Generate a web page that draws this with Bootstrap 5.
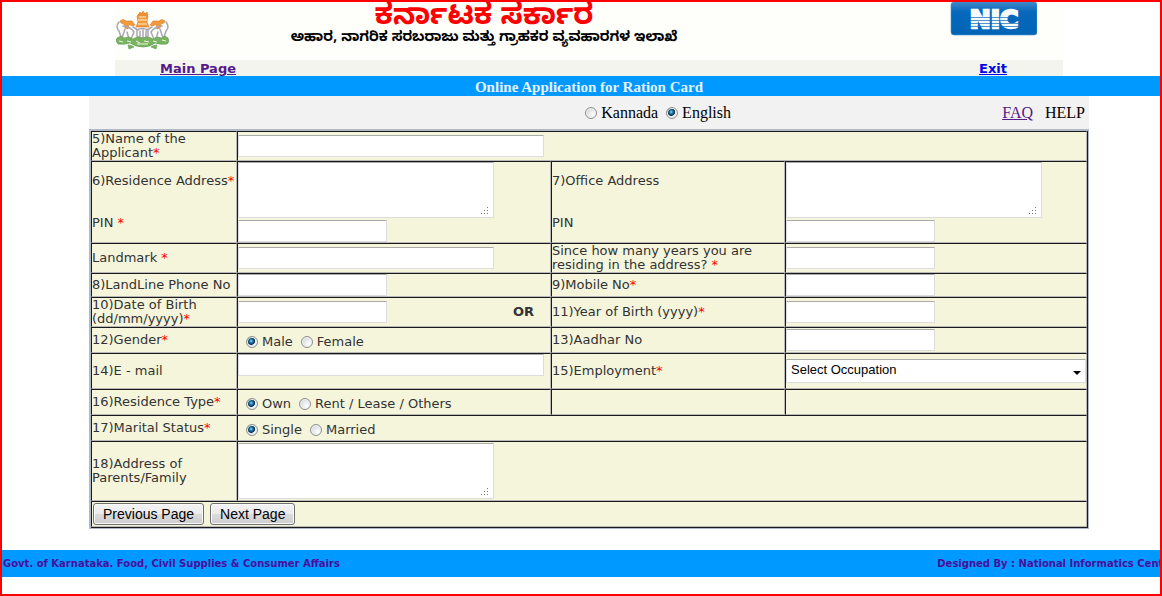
<!DOCTYPE html>
<html lang="en">
<head>
<meta charset="utf-8">
<meta name="viewport" content="width=device-width, initial-scale=1">
<title>Online Application for Ration Card</title>
<link href="https://cdn.jsdelivr.net/npm/bootstrap@5.3.0/dist/css/bootstrap.min.css" rel="stylesheet">
<style>
  body { background: #fff; }
  .frame { border: 2px solid #f00; min-height: 100vh; overflow: hidden; }
  .sheet { width: calc(100% + 16px); }
  .masthead { max-width: 948px; background: #fefefb; font-family: "DejaVu Sans", sans-serif; }
  .brand-row { height: 58px; }
  .brand-side { width: 114px; }
  .dept { padding-right: 210px; font-family: "Noto Sans Kannada", "Noto Sans", sans-serif; font-weight: 700; }
  .dept h1 { font: inherit; font-size: 29px; line-height: 38px; color: #f00; }
  .dept p { font-size: 14px; line-height: 20px; margin-top: -10px; color: #000; }
  .menu-row { height: 16px; background: #f4f4ef; font-size: 13px; line-height: 18px; font-weight: 700; padding: 0 56px 0 45px; }
  .visited { color: #551a8b; }
  .fresh { color: #00e; }
  .title-bar { background: #09f; color: #e4f2ff; font: 700 15px/20px "Liberation Serif", serif; height: 20px; padding-top: 1px; }
  .app-form { max-width: 1000px; }
  .lang-bar { height: 33px; background: #f2f2f2; color: #000; font: 16px/20px "Liberation Serif", serif; }
  .lang-choice { padding-right: 108px; }
  .grid-box { border: 2px solid #b1b9c6; border-right-width: 1px; border-bottom-width: 1px; }
  .fields { table-layout: fixed; border-collapse: separate; border-spacing: 0; border: solid #1a1a1a; border-width: 0 1px 1px 0;
    background: #f5f5dc; color: #333; font: 13px/14px "DejaVu Sans", sans-serif; }
  .fields th, .fields td { padding: 0; font-weight: 400; vertical-align: middle; text-align: left; border: 1px solid #b8b8b8; border-top-color: #1a1a1a; border-left-color: #1a1a1a; }
  .c-label { width: 146px; } .c-field { width: 314px; } .c-label2 { width: 234px; }
  .h-22 { height: 24px; } .h-24 { height: 26px; } .h-28 { height: 30px; } .h-34 { height: 36px; } .h-58 { height: 60px; } .h-80 { height: 82px; }
  .req { color: #f00; }
  .txt { display: block; max-width: 100%; height: 22px; padding: 0 4px; background: #fff; border: 1px solid #ddd; border-top-color: #aaa; border-radius: 1px; font: 13px/18px "Liberation Sans", sans-serif; color: #000; }
  textarea.txt { height: 56px; }
  textarea.txt::-webkit-resizer { background: url("data:image/svg+xml,%3Csvg xmlns='http://www.w3.org/2000/svg' width='14' height='14'%3E%3Cpath d='M8 4h1v1H8zM5 7h1v1H5zM8 7h1v1H8zM2 10h1v1H2zM5 10h1v1H5zM8 10h1v1H8z' fill='%23777'/%3E%3C/svg%3E") no-repeat right bottom; }
  .txt + .txt { margin-top: 2px; }
  .w-s { width: 149px; } .w-m { width: 256px; } .w-l { width: 306px; }
  .occ { width: 100%; height: 24px; padding: 0 4px 2px; appearance: none;
    background: #fff url("data:image/svg+xml,%3Csvg xmlns='http://www.w3.org/2000/svg' width='8' height='4'%3E%3Cpath d='M0 0h8L4 4z'/%3E%3C/svg%3E") no-repeat right 4px top 11px; }
  .dot { appearance: none; flex: none; width: 12px; height: 12px; margin: 0; border: 1px solid #8e8f8f; border-radius: 50%;
    background: radial-gradient(circle at 70% 70%, #fff, #c9ced2); box-shadow: inset 0 0 0 1px #f4f4f4; }
  .dot:checked { background: radial-gradient(circle at 42% 40%, #8fd8f4 0, #1c6f9e 22%, #0b3352 42%, #e3e7ea 50%); }
  .opts { padding: 3px 0 0 8px; }
  .acts { gap: 6px; padding-left: 1px; }
  .push { border: 1px solid #707070; border-radius: 3px; background: linear-gradient(#f3f3f3, #ebebeb 49%, #dcdcdc 51%, #cdcdcd); box-shadow: inset 0 0 0 1px #fbfbfb;
    height: 22px; padding: 0 9px; color: #000; font: 14px/18px "Liberation Sans", sans-serif; }
  .foot { margin-top: 21px; height: 27px; background: #09f; color: #4b0d9c; font: 700 10px/27px "DejaVu Sans", sans-serif; padding: 0 1px; white-space: nowrap; }
</style>
</head>
<body>
<div class="frame">
  <div class="sheet">
    <header class="masthead mx-auto">
      <div class="brand-row d-flex">
        <div class="brand-side flex-shrink-0">
          <svg width="56" height="50" viewBox="0 0 56 50" role="img" aria-label="Karnataka emblem">
            <g fill="#f39a3c" stroke="#d97b22" stroke-width=".6">
              <path d="M22 14q5-6 11 0l-1 6 2 5H21l2-5z"/>
              <path d="M23 13l2-3 2 2 1-3 2 3 2-2 1 3z"/>
              <path d="M5 19q3-3 6 0l6 0 3 4-3 1-3-2-1 5-3-1-1-4-3-1zM50 19q-3-3-6 0l-6 0-3 4 3 1 3-2 1 5 3-1 1-4 3-1z"/>
            </g>
            <path d="M24 15h7M23 18h9M23 22h9" stroke="#fff0d8" stroke-width="1"/>
            <g fill="none" stroke="#aaa6b5" stroke-width="1.5" stroke-linecap="round">
              <path d="M4 20q-4 5 0 9l2 6M8 24q8 1 11 6l-3 7M10 27l-3 9M12 30l2 7M18 25l5 3"/>
              <path d="M51 20q4 5 0 9l-2 6M47 24q-8 1-11 6l3 7M45 27l3 9M43 30l-2 7M37 25l-5 3"/>
              <path d="M22 28q5-3 11 0v6q-5 5-11 0zM25 29v6M28 28v8M31 29v6"/>
            </g>
            <g fill="#79b35f" stroke="#5b9a4d" stroke-width=".6">
              <path d="M2 36l4-2 3 2 5-1 4 2 4-2 6 1 6-1 4 2 4-2 5 1 3-2 3 2q2 4-1 6-7 1-12-1-5 4-12 4t-13-4q-6 2-12 1-3-3-1-6z"/>
              <path d="M13 43q4 0 6 2l-5 2zM42 43q-4 0-6 2l5 2z"/>
            </g>
            <path d="M4 39l4 1m4-1 4 1m5-1 4 2m4-2 5 1m4-1 4 1m5-2 4 1M22 42h11" stroke="#eff8e8" stroke-width="1"/>
          </svg>
        </div>
        <div class="dept flex-grow-1 text-center text-nowrap">
          <h1 class="m-0" lang="kn">ಕರ್ನಾಟಕ ಸರ್ಕಾರ</h1>
          <p class="mb-0" lang="kn">ಅಹಾರ, ನಾಗರಿಕ ಸರಬರಾಜು ಮತ್ತು ಗ್ರಾಹಕರ ವ್ಯವಹಾರಗಳ ಇಲಾಖೆ</p>
        </div>
        <div class="brand-side flex-shrink-0">
          <svg width="88" height="34" viewBox="0 0 88 34" role="img" aria-label="NIC">
            <defs><linearGradient id="nicBlue" x1="0" y1="0" x2="0" y2="1"><stop offset="0" stop-color="#3d88ca"/><stop offset=".3" stop-color="#0868bb"/><stop offset="1" stop-color="#0064b5"/></linearGradient></defs>
            <rect x="2" y="0" width="86" height="33" rx="3" fill="url(#nicBlue)" stroke="#4e91ca" stroke-width=".6"/>
            <text x="45" y="26" text-anchor="middle" fill="#f7fbff" stroke="#f7fbff" stroke-width="2.4" font-family="DejaVu Sans, sans-serif" font-weight="700" font-size="25">NIC</text>
            <path d="M16 15.5h58M16 18.5h58M16 21.5h58M16 24.5h58" stroke="#0a68b9" stroke-width=".7"/>
          </svg>
        </div>
      </div>
      <nav class="menu-row d-flex justify-content-between">
        <a class="visited" href="#">Main Page</a>
        <a class="fresh" href="#">Exit</a>
      </nav>
    </header>
    <div class="title-bar text-center">Online Application for Ration Card</div>
    <form class="app-form mx-auto">
      <div class="lang-bar row g-0 align-items-center">
        <div class="col-3"></div>
        <div class="lang-choice col-6 d-flex justify-content-end align-items-center gap-2">
          <label class="d-flex align-items-center gap-1"><input class="dot" type="radio" name="lang">Kannada</label>
          <label class="d-flex align-items-center gap-1"><input class="dot" type="radio" name="lang" checked>English</label>
        </div>
        <div class="col-3 text-end"><a class="visited me-2" href="#">FAQ</a> <span class="me-1">HELP</span></div>
      </div>
      <div class="grid-box">
        <table class="fields w-100">
          <colgroup><col class="c-label"><col class="c-field"><col class="c-label2"><col></colgroup>
          <tr class="h-28">
            <th><label for="nm">5)Name of the Applicant<span class="req">*</span></label></th>
            <td colspan="3"><input id="nm" class="txt w-l" type="text"></td>
          </tr>
          <tr class="h-80">
            <th><label class="d-block mb-4 pb-1 text-nowrap" for="ra">6)Residence Address<span class="req">*</span></label><label class="d-block" for="rp">PIN <span class="req">*</span></label></th>
            <td><textarea id="ra" class="txt w-m"></textarea><input id="rp" class="txt w-s" type="text"></td>
            <th><label class="d-block mb-4 pb-1" for="oa">7)Office Address</label><label class="d-block" for="op">PIN</label></th>
            <td><textarea id="oa" class="txt w-m"></textarea><input id="op" class="txt w-s" type="text"></td>
          </tr>
          <tr class="h-28">
            <th><label for="lm">Landmark <span class="req">*</span></label></th>
            <td><input id="lm" class="txt w-m" type="text"></td>
            <th><label for="yr">Since how many years you are residing in the address? <span class="req">*</span></label></th>
            <td><input id="yr" class="txt w-s" type="text"></td>
          </tr>
          <tr class="h-22">
            <th><label for="ph">8)LandLine Phone No</label></th>
            <td><input id="ph" class="txt w-s" type="text"></td>
            <th><label for="mb">9)Mobile No<span class="req">*</span></label></th>
            <td><input id="mb" class="txt w-s" type="text"></td>
          </tr>
          <tr class="h-28">
            <th><label for="db">10)Date of Birth (dd/mm/yyyy)<span class="req">*</span></label></th>
            <td><div class="d-flex justify-content-between align-items-center pe-3"><input id="db" class="txt w-s" type="text"><b>OR</b></div></td>
            <th><label for="yb">11)Year of Birth (yyyy)<span class="req">*</span></label></th>
            <td><input id="yb" class="txt w-s" type="text"></td>
          </tr>
          <tr class="h-24">
            <th>12)Gender<span class="req">*</span></th>
            <td><div class="opts d-flex gap-2">
              <label class="d-flex align-items-center gap-1"><input class="dot" type="radio" name="sex" checked>Male</label>
              <label class="d-flex align-items-center gap-1"><input class="dot" type="radio" name="sex">Female</label></div></td>
            <th><label for="ad">13)Aadhar No</label></th>
            <td><input id="ad" class="txt w-s" type="text"></td>
          </tr>
          <tr class="h-34">
            <th><label for="em">14)E - mail</label></th>
            <td class="align-top"><input id="em" class="txt w-l" type="email"></td>
            <th><label for="oc">15)Employment<span class="req">*</span></label></th>
            <td><select id="oc" class="txt occ"><option>Select Occupation</option></select></td>
          </tr>
          <tr class="h-24">
            <th>16)Residence Type<span class="req">*</span></th>
            <td><div class="opts d-flex gap-2">
              <label class="d-flex align-items-center gap-1"><input class="dot" type="radio" name="res" checked>Own</label>
              <label class="d-flex align-items-center gap-1"><input class="dot" type="radio" name="res">Rent / Lease / Others</label></div></td>
            <td></td>
            <td></td>
          </tr>
          <tr class="h-24">
            <th>17)Marital Status<span class="req">*</span></th>
            <td colspan="3"><div class="opts d-flex gap-2">
              <label class="d-flex align-items-center gap-1"><input class="dot" type="radio" name="mar" checked>Single</label>
              <label class="d-flex align-items-center gap-1"><input class="dot" type="radio" name="mar">Married</label></div></td>
          </tr>
          <tr class="h-58">
            <th><label for="pa">18)Address of Parents/Family</label></th>
            <td colspan="3"><textarea id="pa" class="txt w-m"></textarea></td>
          </tr>
          <tr class="h-24">
            <td colspan="4"><div class="acts d-flex"><button class="push" type="button">Previous Page</button><button class="push" type="button">Next Page</button></div></td>
          </tr>
        </table>
      </div>
    </form>
    <footer class="foot d-flex justify-content-between">
      <span>Govt. of Karnataka. Food, Civil Supplies &amp; Consumer Affairs</span>
      <span>Designed By : National Informatics Centre</span>
    </footer>
  </div>
</div>
<script src="https://cdn.jsdelivr.net/npm/bootstrap@5.3.0/dist/js/bootstrap.bundle.min.js"></script>
</body>
</html>
